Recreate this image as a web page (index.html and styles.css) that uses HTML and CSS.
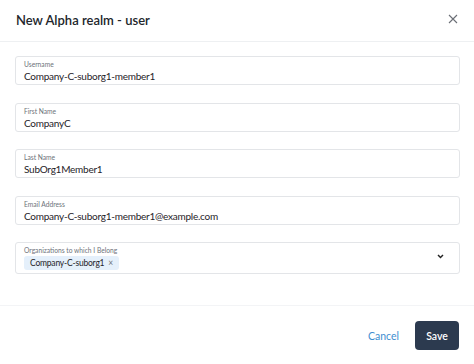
FILE: index.html
```html
<!DOCTYPE html>
<html lang="en">
<head>
<meta charset="UTF-8" />
<title>New Alpha realm - user</title>
<link rel="stylesheet" href="styles.css">
</head>
<body>
  <div class="modal">
    <header class="modal-header">
      <h2>New Alpha realm - user</h2>
      <button class="close-btn" aria-label="Close">
        <svg width="10" height="10" viewBox="0 0 10 10"><path d="M1 1L9 9M9 1L1 9" stroke="#6b6f76" stroke-width="1.1" fill="none"/></svg>
      </button>
    </header>

    <div class="modal-body">
      <div class="field">
        <label>Username</label>
        <div class="value">Company-C-suborg1-member1</div>
      </div>
      <div class="field">
        <label>First Name</label>
        <div class="value">CompanyC</div>
      </div>
      <div class="field">
        <label>Last Name</label>
        <div class="value">SubOrg1Member1</div>
      </div>
      <div class="field">
        <label>Email Address</label>
        <div class="value">Company-C-suborg1-member1@example.com</div>
      </div>
      <div class="field select">
        <div class="select-main">
          <label>Organizations to which I Belong</label>
          <div class="chips">
            <span class="chip">Company-C-suborg1 <span class="chip-x">&times;</span></span>
          </div>
        </div>
        <svg class="chevron" width="7" height="5" viewBox="0 0 7 5"><path d="M1 1L3.5 3.6L6 1" stroke="#222" stroke-width="1.4" fill="none"/></svg>
      </div>
    </div>

    <footer class="modal-footer">
      <button class="cancel-btn">Cancel</button>
      <button class="save-btn">Save</button>
    </footer>
  </div>
</body>
</html>
```

FILE: styles.css
```css
body {
  margin: 0;
  background: #fff;
  font-family: Lato, "Open Sans", sans-serif;
  color: #1f2329;
}
.modal {
  width: 474px;
  height: 364px;
  display: flex;
  flex-direction: column;
}
.modal-header {
  height: 42px;
  border-bottom: 1px solid #eef0f2;
  display: flex;
  align-items: center;
  justify-content: space-between;
  padding: 0 16px 0 16px;
  box-sizing: border-box;
}
.modal-header h2 {
  margin: 0;
  font-size: 13px;
  font-weight: 600;
  color: #22262b;
  margin-top: -2px;
}
.close-btn {
  background: none;
  border: none;
  padding: 0;
  display: flex;
  margin-top: -3px;
}
.modal-body {
  padding: 14px 14px 0 15px;
  display: flex;
  flex-direction: column;
  gap: 17.5px;
  height: 264px;
  box-sizing: border-box;
  border-bottom: 1px solid #f3f4f6;
}
.field {
  border: 1px solid #e3e5e8;
  border-radius: 3px;
  height: 29px;
  box-sizing: border-box;
  padding: 3px 8px 0 8px;
}
.field label {
  display: block;
  font-size: 6.7px;
  color: #6e737a;
  line-height: 9px;
}
.field .value {
  font-size: 10px;
  letter-spacing: -0.25px;
  line-height: 14px;
  color: #1f2329;
}
.field.select {
  height: 32px;
  display: flex;
  align-items: flex-start;
  justify-content: space-between;
  padding-right: 15px;
}
.chips {
  display: flex;
  margin-top: 1px;
}
.chip {
  background: #e5f0fb;
  border-radius: 3px;
  font-size: 8.5px;
  letter-spacing: -0.2px;
  line-height: 14px;
  padding: 0 6px 0 6px;
  color: #1f2329;
}
.chip-x {
  color: #6e737a;
  margin-left: 2px;
}
.chevron {
  margin-top: 8px;
}
.modal-footer {
  flex: 1;
  display: flex;
  justify-content: flex-end;
  align-items: flex-start;
  padding: 15px 15px 0 0;
  gap: 12px;
}
.cancel-btn {
  background: none;
  border: none;
  color: #3e8ed0;
  font-family: inherit;
  font-size: 10.5px;
  height: 29px;
  padding: 0 4px;
}
.save-btn {
  background: #2c3a4f;
  border: none;
  border-radius: 4px;
  color: #fff;
  font-family: inherit;
  font-size: 10.5px;
  font-weight: 600;
  width: 44px;
  height: 29px;
}
```
